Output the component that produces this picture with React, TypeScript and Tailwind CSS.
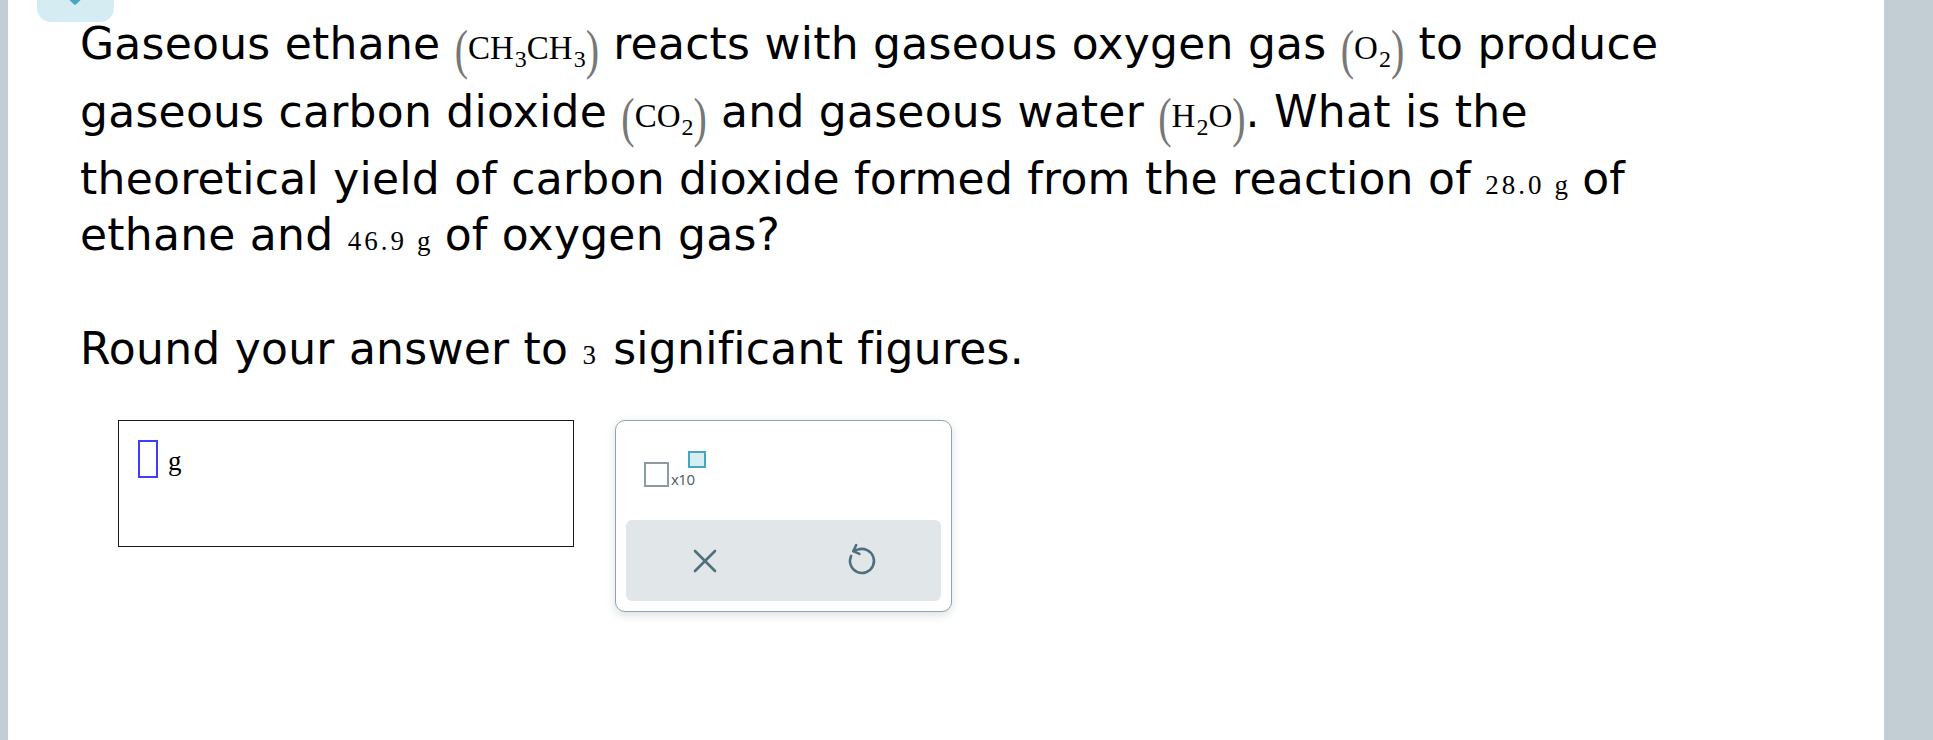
import { RotateCcw } from "lucide-react";

const serif = "font-['Liberation_Serif',serif]";

function Paren({ children }: { children: string }) {
  return (
    <span
      className={`inline-block leading-[0] text-[40px] text-[#777] tracking-normal translate-y-[4px] scale-y-[1.35] ${serif}`}
    >
      {children}
    </span>
  );
}

function Sub({ children }: { children: string }) {
  return <span className="relative top-[8px] ml-[1px] text-[24px]">{children}</span>;
}

function Chem({ parts }: { parts: [string, string?][] }) {
  return (
    <span className={`leading-[0] text-[33px] tracking-normal ${serif}`}>
      <Paren>(</Paren>
      {parts.map(([main, sub], i) => (
        <span key={i}>
          {main}
          {sub && <Sub>{sub}</Sub>}
        </span>
      ))}
      <Paren>)</Paren>
    </span>
  );
}

function Num({ value, unit }: { value: string; unit?: string }) {
  return (
    <span className={`leading-[0] text-[27px] ${serif}`}>
      <span className="tracking-[3px]">{value}</span>
      {unit && <span className="ml-[10px] tracking-normal">{unit}</span>}
    </span>
  );
}

function XIcon() {
  return (
    <svg width="24" height="24" viewBox="0 0 24 24" fill="none">
      <path
        d="M2 2L22 22M22 2L2 22"
        stroke="#4f6f7c"
        strokeWidth="2.6"
        strokeLinecap="round"
      />
    </svg>
  );
}

export default function App() {
  return (
    <div className="flex h-[740px] w-full bg-white font-['DejaVu_Sans',sans-serif] text-black">
      <div className="w-[8px] shrink-0 bg-[#c3ced4]" />

      <main className="relative flex-1 pl-[72px] pt-[16px]">
        {/* collapse badge */}
        <div className="absolute left-[29px] top-0 h-[22px] w-[77px] overflow-hidden rounded-b-[14px] bg-[#d5edf2]">
          <svg
            className="absolute left-[28px] top-[-9px]"
            width="20"
            height="16"
            viewBox="0 0 20 16"
            fill="none"
          >
            <polyline
              points="2,3 10,11 18,3"
              stroke="#4aa5c1"
              strokeWidth="5"
              strokeLinejoin="round"
            />
          </svg>
        </div>

        <div className="whitespace-nowrap text-[44px] leading-[55px] tracking-[0.25px] [font-variant-ligatures:none]">
          <div>
            Gaseous ethane <Chem parts={[["CH", "3"], ["CH", "3"]]} /> reacts
            with gaseous oxygen gas <Chem parts={[["O", "2"]]} /> to produce
          </div>
          <div className="mt-[13px]">
            gaseous carbon dioxide <Chem parts={[["CO", "2"]]} /> and gaseous
            water <Chem parts={[["H", "2"], ["O"]]} />. What is the
          </div>
          <div className="mt-[12px]">
            theoretical yield of carbon dioxide formed from the reaction of{" "}
            <Num value="28.0" unit="g" /> of
          </div>
          <div className="mt-[1px]">
            ethane and <Num value="46.9" unit="g" /> of oxygen gas?
          </div>
          <div className="mt-[59px]">
            Round your answer to <Num value="3" /> significant figures.
          </div>
        </div>

        <div className="ml-[38px] mt-[44px] flex items-start gap-[41px]">
          {/* answer field */}
          <div className="h-[127px] w-[456px] border-[1.5px] border-[#1a1a1a] px-[19px] pt-[19px]">
            <div className="flex items-end gap-[10px]">
              <div className="h-[38px] w-[20px] border-2 border-[#3d3dff]" />
              <span className={`text-[27px] leading-[34px] ${serif}`}>g</span>
            </div>
          </div>

          {/* keypad */}
          <div className="flex h-[192px] w-[337px] flex-col rounded-[10px] border-[1.5px] border-[#8fa4ae] bg-white shadow-[0_3px_10px_rgba(60,80,90,0.18)]">
            <div className="flex-1 pl-[28px] pt-[30px]">
              <div className="flex items-start">
                <div className="mt-[11px] h-[25px] w-[25px] border-2 border-[#8a9ba3]" />
                <span className="mt-[20px] ml-[2px] font-['Open_Sans',sans-serif] text-[15px] leading-[16px] tracking-[-0.5px] text-[#4a5a63]">
                  x10
                </span>
                <div className="-ml-[7px] h-[17px] w-[18px] border-2 border-[#4aa3bf] bg-[#d4eef4]" />
              </div>
            </div>
            <div className="mx-[10px] mb-[10px] flex h-[81px] rounded-[6px] bg-[#e1e6e9]">
              <div className="flex flex-1 items-center justify-center">
                <XIcon />
              </div>
              <div className="flex flex-1 items-center justify-center">
                <RotateCcw
                  size={32}
                  strokeWidth={1.9}
                  color="#4f6f7c"
                  className="rotate-[25deg]"
                />
              </div>
            </div>
          </div>
        </div>
      </main>

      <div className="w-[49px] shrink-0 bg-[#c3ced4]" />
    </div>
  );
}
